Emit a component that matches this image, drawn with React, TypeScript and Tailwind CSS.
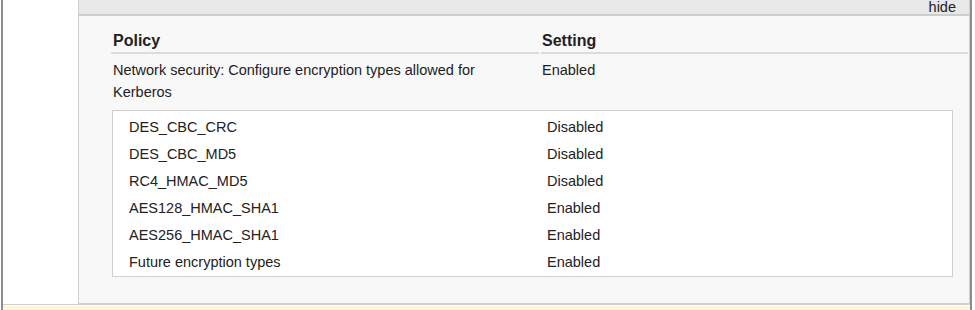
export default function App() {
  const rows = [
    ["DES_CBC_CRC", "Disabled"],
    ["DES_CBC_MD5", "Disabled"],
    ["RC4_HMAC_MD5", "Disabled"],
    ["AES128_HMAC_SHA1", "Enabled"],
    ["AES256_HMAC_SHA1", "Enabled"],
    ["Future encryption types", "Enabled"],
  ];

  return (
    <div
      className="w-[975px] h-[310px] bg-white overflow-hidden text-[#222]"
      style={{ fontFamily: '"Liberation Sans", Arial, sans-serif' }}
    >
      <div className="ml-px w-[971px] h-full border-x-2 border-[#8c8c8c] flex flex-col">
        {/* panel area */}
        <div className="h-[304px] pl-[75px] flex">
          <div className="w-[893px] h-full border-x border-b border-[#cfcfcf] bg-[#f8f8f8] flex flex-col">
            <div className="h-[16px] bg-[#e8e8e8] border-b-2 border-[#cdcdcd] flex justify-end items-center pr-[13px] text-[14.5px] leading-none">
              hide
            </div>

            <div className="pl-[32px] pr-[1px] pt-[16px]">
              {/* header row */}
              <div className="flex text-[16px] leading-[18px] font-bold">
                <div className="w-[428px] mr-[2px] pl-[2px] pb-[2px] border-b-2 border-[#dcdcdc]">Policy</div>
                <div className="flex-1 pl-[1px] pb-[2px] border-b-2 border-[#dcdcdc]">Setting</div>
              </div>

              <div className="flex text-[14.5px] leading-[22px] pt-[5px]">
                <div className="w-[430px] pl-[2px] pr-[40px]">
                  Network security: Configure encryption types allowed for Kerberos
                </div>
                <div className="pl-[1px]">Enabled</div>
              </div>

              <div className="mt-[7px] ml-[1px] w-[841px] border border-[#cfcfcf] bg-white pt-[3px] text-[14.5px]">
                {rows.map(([name, value]) => (
                  <div key={name} className="flex h-[27px] items-center">
                    <div className="w-[434px] pl-[16px]">{name}</div>
                    <div>{value}</div>
                  </div>
                ))}
              </div>
            </div>
          </div>
        </div>

        <div className="h-px bg-[#d0d0d0]" />
        <div className="h-px bg-white" />
        <div className="flex-1 bg-[#fdf5da]" />
      </div>
    </div>
  );
}
